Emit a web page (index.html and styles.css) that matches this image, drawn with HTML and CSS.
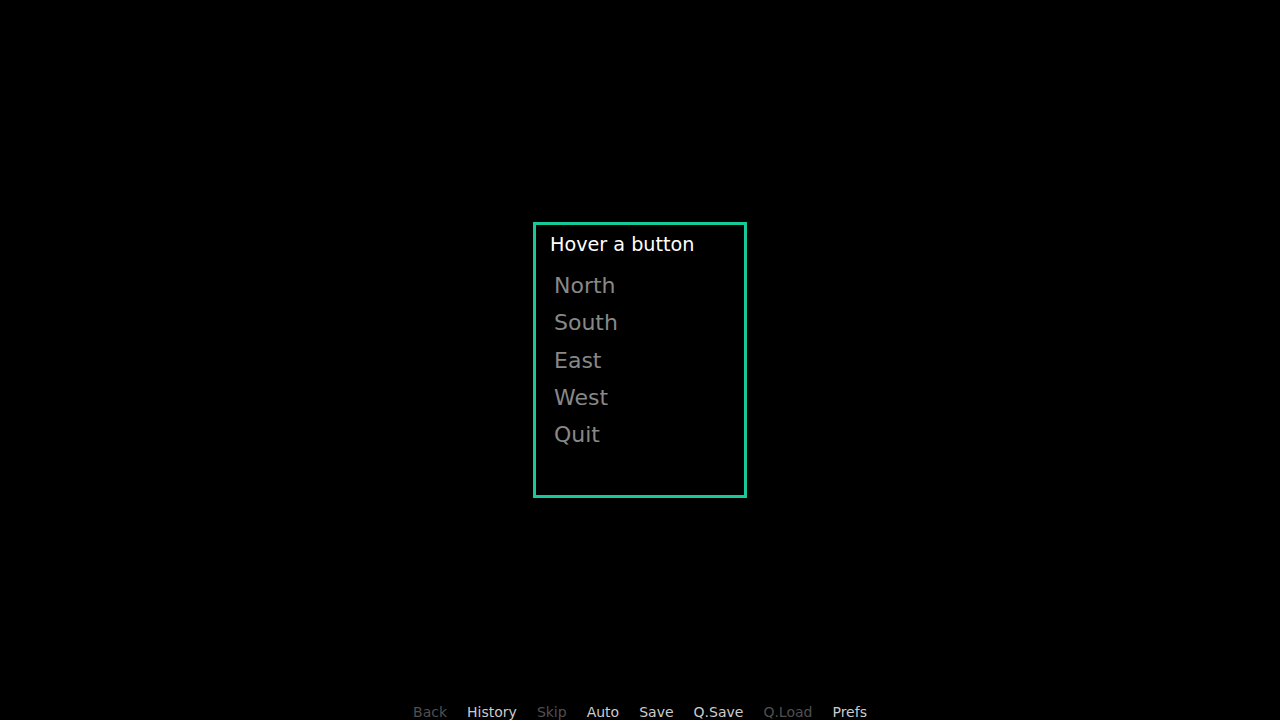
FILE: index.html
```html
<!DOCTYPE html>
<html lang="en">
<head>
    <meta charset="utf-8">
    <title>Hover a button</title>
    <link rel="stylesheet" href="styles.css">
</head>
<body>

    <div class="screen">
        <div class="stage">
            <div class="choice-box">
                <div class="choice-title">Hover a button</div>
                <div class="choice-list">
                    <a class="choice">North</a>
                    <a class="choice">South</a>
                    <a class="choice">East</a>
                    <a class="choice">West</a>
                    <a class="choice">Quit</a>
                </div>
            </div>
        </div>

        <div class="quick-menu">
            <a class="qm off">Back</a>
            <a class="qm">History</a>
            <a class="qm off">Skip</a>
            <a class="qm">Auto</a>
            <a class="qm">Save</a>
            <a class="qm">Q.Save</a>
            <a class="qm off">Q.Load</a>
            <a class="qm">Prefs</a>
        </div>
    </div>

</body>
</html>
```

FILE: styles.css
```css
html, body{
    margin:0;
    padding:0;
    background:#000;
    height:100%;
    overflow:hidden;
}
body{
    font-family:"DejaVu Sans", sans-serif;
}

.screen{
    width:1280px;
    height:720px;
    display:flex;
    flex-direction:column;
}

.stage{
    flex:1;
    display:flex;
    align-items:flex-start;
    justify-content:center;
    padding-top:222px;
}

.choice-box{
    width:208px;
    height:270px;
    border:3px solid #16c89a;
    box-sizing:content-box;
}
.choice-title{
    color:#fff;
    font-size:19.2px;
    padding:8px 0 0 14px;
    line-height:24px;
}
.choice-list{
    display:flex;
    flex-direction:column;
    padding:10px 0 0 18px;
}
.choice{
    color:#888;
    font-size:22px;
    line-height:37.25px;
    cursor:pointer;
}

/* quick menu sits on the bottom edge, partly clipped */
.quick-menu{
    display:flex;
    justify-content:center;
    gap:20px;
    height:20px;
}
.qm{
    color:#ccc;
    font-size:14px;
    line-height:24px;
    cursor:pointer;
}
.qm.off{
    color:#505050;
}
```
